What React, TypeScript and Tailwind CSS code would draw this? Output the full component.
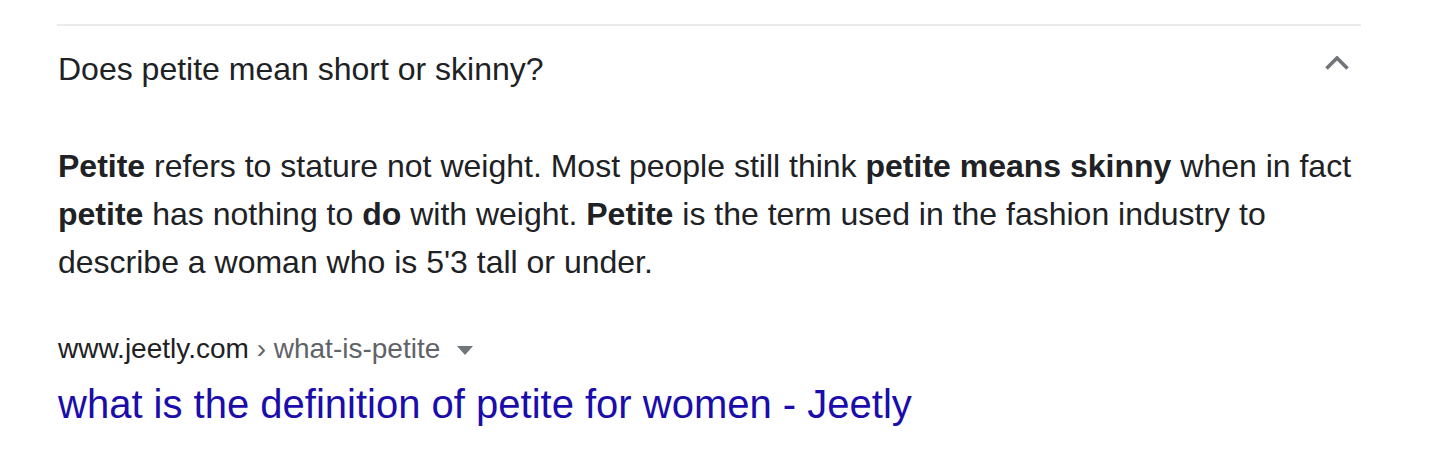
import React from 'react';

const ChevronUp: React.FC = () => (
  <svg width="24" height="14" viewBox="0 0 24 14" className="block">
    <path d="M1.5 12.5 L12 2 L22.5 12.5" fill="none" stroke="#70757a" strokeWidth="3.6" />
  </svg>
);

const Caret: React.FC = () => (
  <svg width="16" height="9" viewBox="0 0 16 9" className="block">
    <polygon points="0,0 16,0 8,9" fill="#70757a" />
  </svg>
);

const App: React.FC = () => {
  return (
    <div className="w-[1444px] h-[449px] overflow-hidden bg-white font-['Liberation_Sans',Arial,sans-serif] text-[#202124]">
      <div className="ml-[57px] w-[1304px] pt-[24px]">
        <div className="border-t-2 border-[#ebebeb]">
          <div className="flex items-start justify-between">
            <div className="pt-[19px] pl-[1px] text-[32px] leading-[48px]">Does petite mean short or skinny?</div>
            <div className="mt-[30px] mr-[12px]">
              <ChevronUp />
            </div>
          </div>

          <div className="mt-[49px] pl-[1px] text-[32px] leading-[48px]">
            <b>Petite</b> refers to stature not weight. Most people still think <b>petite means skinny</b> when in fact{' '}
            <b>petite</b> has nothing to <b>do</b> with weight. <b>Petite</b> is the term used in the fashion industry to
            describe a woman who is 5'3 tall or under.
          </div>

          <div className="mt-[43px] pl-[1px] flex items-center text-[28px] leading-[40px]">
            <span>www.jeetly.com</span>
            <span className="text-[#5f6368]">&nbsp;› what-is-petite</span>
            <span className="ml-[17px] mt-[2px]">
              <Caret />
            </span>
          </div>

          <div className="mt-[9px] pl-[1px] text-[40px] leading-[52px] text-[#1a0dab]">
            what is the definition of petite for women - Jeetly
          </div>
        </div>
      </div>
    </div>
  );
};

export default App;
